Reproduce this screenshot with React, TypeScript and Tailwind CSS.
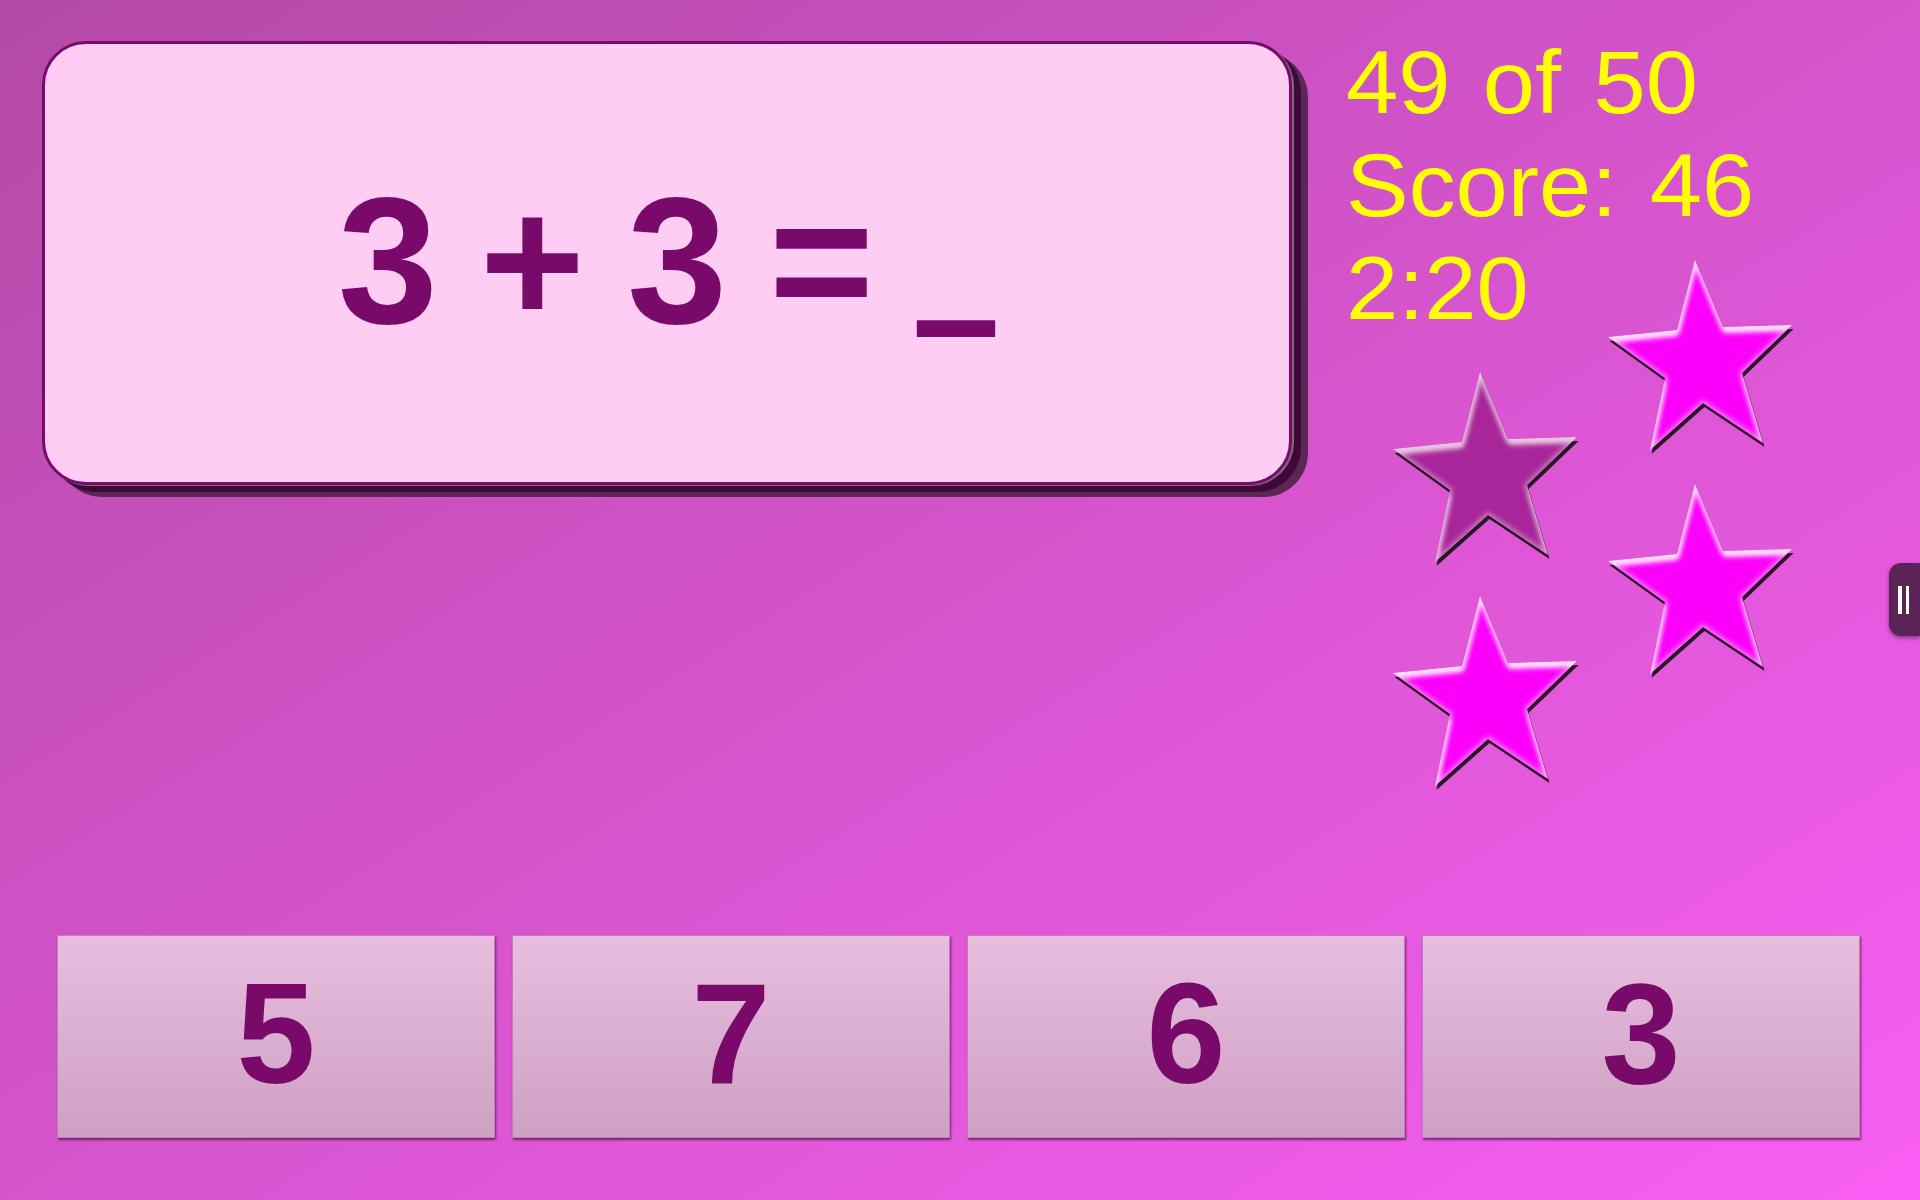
import React from "react";

const PTS = "88,0 116,67 185,65 135,113 156,183 96,143 43,190 58,118 1,77 70,70";

function Star({ color, id, rim }: { color: string; id: string; rim: string }) {
  return (
    <svg width="185" height="190" viewBox="0 0 185 190" className="block overflow-visible">
      <defs>
        <clipPath id={`clip-${id}`}>
          <polygon points={PTS} />
        </clipPath>
        <filter id={`blur-${id}`} x="-20%" y="-20%" width="140%" height="140%">
          <feGaussianBlur stdDeviation="2.4" />
        </filter>
        <filter id={`soft-${id}`} x="-20%" y="-20%" width="140%" height="140%">
          <feGaussianBlur stdDeviation="0.6" />
        </filter>
      </defs>
      <polygon points={PTS} transform="translate(1.5,4)" fill="#2a1628" filter={`url(#soft-${id})`} />
      <g clipPath={`url(#clip-${id})`}>
        <polygon points={PTS} fill={rim} />
        <polygon points={PTS} transform="translate(1,6)" fill={color} filter={`url(#blur-${id})`} />
        <polygon
          points={PTS}
          fill="none"
          stroke={rim}
          strokeWidth="5"
          opacity="0.55"
          filter={`url(#blur-${id})`}
        />
      </g>
    </svg>
  );
}

function AnswerButton({ value }: { value: string }) {
  return (
    <div className="w-[438px] h-[203px] shrink-0 flex items-center justify-center pb-[6px] border border-[#c47cba] bg-linear-to-b from-[#e9bde0] to-[#cda0c4] shadow-[1px_2px_2px_rgba(95,25,85,0.8)]">
      <span className="text-[142px] leading-none font-bold text-[#7a0a6a]">{value}</span>
    </div>
  );
}

export default function App() {
  return (
    <div className="relative w-[1920px] h-[1200px] overflow-hidden flex flex-col bg-linear-to-br from-[#b34aa6] to-[#f95ef4] font-['Liberation_Sans',Arial,sans-serif]">
      <div className="flex pt-[31px] pl-[42px]">
        <div className="mt-[10px] w-[1250px] h-[444px] shrink-0 rounded-[44px] border-[3px] border-[#7a0a6a] bg-[#ffccf4] shadow-[2px_1px_0_#7d6b7b,9px_7px_0_#3d0a38,16px_12px_0_#5c2757] flex items-center justify-center">
          <span className="relative left-[10px] top-[-2px] text-[180px] leading-none font-bold text-[#7a0a6a] [word-spacing:-8px] whitespace-pre">
            3 + 3 ={" "}
            <span className="relative top-[-13px] left-[-10px] inline-block scale-x-[0.69] [-webkit-text-stroke:10px_#7a0a6a]">
              _
            </span>
          </span>
        </div>
        <div className="ml-[54px] flex flex-col">
          <div className="text-[89px] leading-[103px] text-[#ffff00] whitespace-nowrap origin-left scale-x-[1.055] [word-spacing:6px]">
            <div>49 of 50</div>
            <div>Score: 46</div>
            <div>2:20</div>
          </div>
          <div className="-mt-[80px] ml-[46px] flex gap-[30px]">
            <div className="mt-[112px] flex flex-col gap-[34px]">
              <Star id="a" color="#a8289a" rim="#e8c8e2" />
              <Star id="d" color="#fb00fb" rim="#ffe0fb" />
            </div>
            <div className="flex flex-col gap-[34px]">
              <Star id="b" color="#fb00fb" rim="#ffe0fb" />
              <Star id="c" color="#fb00fb" rim="#ffe0fb" />
            </div>
          </div>
        </div>
      </div>

      <div className="mt-auto mb-[62px] pl-[57px] flex gap-[17px]">
        <AnswerButton value="5" />
        <AnswerButton value="7" />
        <AnswerButton value="6" />
        <AnswerButton value="3" />
      </div>

      <div className="absolute right-0 top-[563px] w-[31px] h-[73px] rounded-l-[12px] bg-[#5a2456] shadow-[0_2px_4px_rgba(0,0,0,0.4)] flex items-center pl-[9px] gap-[4px]">
        <div className="w-[3.5px] h-[28px] bg-white" />
        <div className="w-[3.5px] h-[28px] bg-white" />
      </div>
    </div>
  );
}
